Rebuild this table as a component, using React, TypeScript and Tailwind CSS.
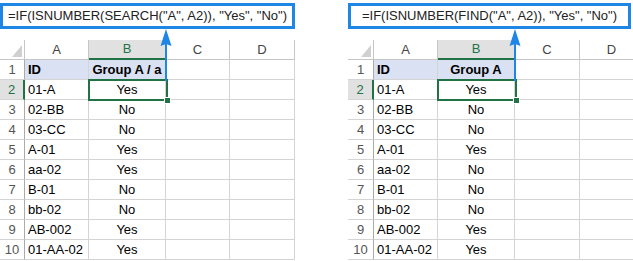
import React from 'react';

type Row = [string, string];

const ids = ['01-A', '02-BB', '03-CC', 'A-01', 'aa-02', 'B-01', 'bb-02', 'AB-002', '01-AA-02'];

const searchRows: Row[] = ids.map((id, i) => [id, ['Yes', 'No', 'No', 'Yes', 'Yes', 'No', 'No', 'Yes', 'Yes'][i]]);
const findRows: Row[] = ids.map((id, i) => [id, ['Yes', 'No', 'No', 'Yes', 'No', 'No', 'No', 'Yes', 'Yes'][i]]);

const font = { fontFamily: '"Liberation Sans", Arial, sans-serif' };

function UpArrow({ left }: { left: string }) {
  return (
    <svg
      className={`absolute top-[29px] ${left}`}
      width="14"
      height="52"
      viewBox="0 0 14 52"
    >
      <line x1="7" y1="12" x2="7" y2="52" stroke="#1e87e5" strokeWidth="2" />
      <path d="M7 0 L12.5 17 L7 15 L1.5 17 Z" fill="#1e87e5" />
    </svg>
  );
}

function Sheet({
  formula,
  header,
  rows,
  cols,
  boxWidth,
  selLeft,
  arrowLeft,
  handleLeft,
  width,
}: {
  formula: string;
  header: string;
  rows: Row[];
  cols: string;
  boxWidth: string;
  selLeft: string;
  arrowLeft: string;
  handleLeft: string;
  width: string;
}) {
  const cell = 'h-5 border-b border-r border-[#d4d4d4] flex items-center';
  const rowHead = 'h-5 border-b border-r border-b-[#d4d4d4] border-r-[#ababab] flex items-center justify-center text-[#555]';

  return (
    <div className={`relative shrink-0 overflow-hidden pt-[3px] ${width}`}>
      <div
        className={`h-[26px] border-[3px] border-[#1e87e5] bg-white flex items-center justify-center text-[13px] text-[#222] ${boxWidth}`}
      >
        {formula}
      </div>

      <div className={`mt-[11px] grid text-[13px] ${cols}`}>
        {/* column headers */}
        <div className="relative h-5 border-b border-r border-[#c6c6c6] border-t-0">
          <svg className="absolute right-[2px] bottom-[2px]" width="10" height="12" viewBox="0 0 10 12">
            <path d="M10 0 L10 12 L0 12 Z" fill="#d0d0d0" />
          </svg>
        </div>
        <div className="h-5 border-b border-r border-[#c6c6c6] flex items-center justify-center text-[#444]">A</div>
        <div className="h-5 border-b-2 border-b-[#217346] border-r border-r-[#c6c6c6] bg-[#e1e1e1] flex items-center justify-center text-[#217346]">
          B
        </div>
        <div className="h-5 border-b border-r border-[#c6c6c6] flex items-center justify-center text-[#444]">C</div>
        <div className="h-5 border-b border-r border-[#c6c6c6] flex items-center justify-center text-[#444]">D</div>

        {/* row 1: labels */}
        <div className={rowHead}>1</div>
        <div className={`${cell} bg-[#d9e1f2] pl-[3px] font-bold text-black`}>ID</div>
        <div className={`${cell} bg-[#d9e1f2] justify-center font-bold text-black`}>{header}</div>
        <div className={cell} />
        <div className={cell} />

        {rows.map(([id, res], i) => {
          const n = i + 2;
          const active = n === 2;
          return (
            <React.Fragment key={n}>
              <div
                className={
                  active
                    ? 'h-5 border-b border-b-[#d4d4d4] border-r-2 border-r-[#217346] bg-[#e1e1e1] flex items-center justify-center text-[#217346]'
                    : rowHead
                }
              >
                {n}
              </div>
              <div className={`${cell} pl-[3px] text-black`}>{id}</div>
              <div className={`${cell} justify-center text-black`}>{res}</div>
              <div className={cell} />
              <div className={cell} />
            </React.Fragment>
          );
        })}
      </div>

      {/* active cell B2 */}
      <div className={`absolute top-[79px] h-[22px] w-[80px] border-2 border-[#217346] ${selLeft}`} />
      <div className={`absolute top-[97px] h-[7px] w-[7px] bg-[#217346] border border-white ${handleLeft}`} />

      <UpArrow left={arrowLeft} />
    </div>
  );
}

export default function App() {
  return (
    <div className="flex h-[261px] w-[633px] gap-[53px] overflow-hidden bg-white" style={font}>
      <Sheet
        formula={'=IF(ISNUMBER(SEARCH("A", A2)), "Yes", "No")'}
        header="Group A / a"
        rows={searchRows}
        cols="grid-cols-[25px_64px_77px_64px_65px]"
        boxWidth="w-[295px]"
        width="w-[295px]"
        selLeft="left-[88px]"
        handleLeft="left-[164px]"
        arrowLeft="left-[159px]"
      />
      <Sheet
        formula={'=IF(ISNUMBER(FIND("A", A2)), "Yes", "No")'}
        header="Group A"
        rows={findRows}
        cols="grid-cols-[26px_64px_77px_65px_64px]"
        boxWidth="w-[283px]"
        width="w-[285px]"
        selLeft="left-[89px]"
        handleLeft="left-[165px]"
        arrowLeft="left-[160px]"
      />
    </div>
  );
}
